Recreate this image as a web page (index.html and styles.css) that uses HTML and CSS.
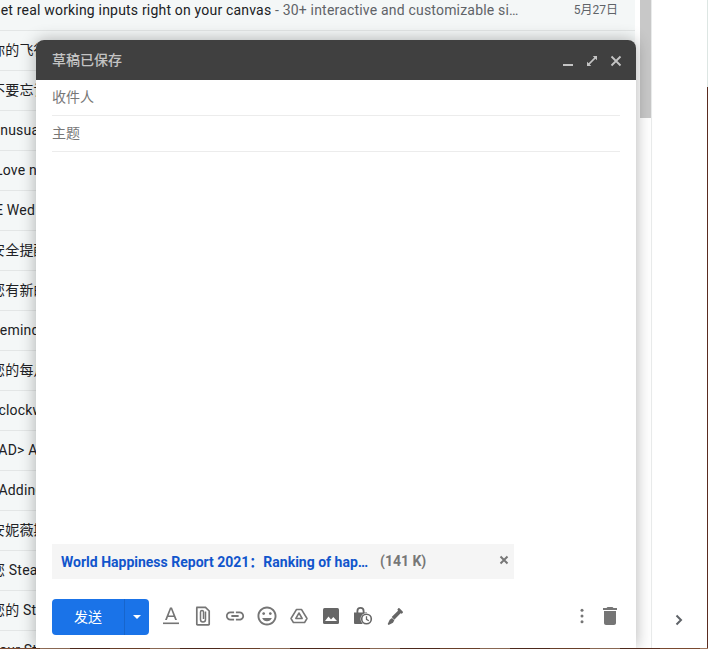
FILE: index.html
```html
<!DOCTYPE html>
<html lang="zh-CN">
<head>
<meta charset="utf-8">
<title>Compose</title>
<link rel="stylesheet" href="styles.css">
</head>
<body>
<div class="app">
  <main class="mail">
    <ul class="rows">
      <li class="row"><span class="subject">Get real working inputs right on your canvas</span><span class="snippet">&nbsp;- 30+ interactive and customizable si…</span><span class="date">5月27日</span></li>
      <li class="row"><span class="subject">你的飞行里程</span></li>
      <li class="row"><span class="subject">不要忘记</span></li>
      <li class="row"><span class="subject">Unusual</span></li>
      <li class="row"><span class="subject">-Love new</span></li>
      <li class="row"><span class="subject">-E Wed</span></li>
      <li class="row"><span class="subject">安全提醒</span></li>
      <li class="row"><span class="subject">您有新的</span></li>
      <li class="row"><span class="subject">Reminder</span></li>
      <li class="row"><span class="subject">您的每月</span></li>
      <li class="row"><span class="subject">sclockwork</span></li>
      <li class="row"><span class="subject">&lt;AD&gt; Ad</span></li>
      <li class="row"><span class="subject">sAdding</span></li>
      <li class="row"><span class="subject">安妮薇斯</span></li>
      <li class="row"><span class="subject">您 Steam</span></li>
      <li class="row"><span class="subject">您的 Steam</span></li>
      <li class="row"><span class="subject">Your Steam</span></li>
    </ul>
  </main>
  <div class="scrollbar"><div class="thumb"></div></div>
  <aside class="side">
    <svg class="chevron" width="10" height="12" viewBox="0 0 10 12"><path d="M2.500 1.500 7 6l-4.500 4.500" fill="none" stroke="#5f6368" stroke-width="2"/></svg>
  </aside>
</div>
<div class="strip"></div>

<section class="compose">
  <header class="compose-head">
    <h1 class="compose-title">草稿已保存</h1>
    <div class="head-icons">
      <svg width="12" height="12" viewBox="0 0 12 12"><rect x="1" y="9" width="10" height="2" fill="#c4c4c4"/></svg>
      <svg width="12" height="12" viewBox="0 0 12 12"><path d="M6.800 1H11V5.200L9.400 3.700 3.700 9.400 5.200 11H1V6.800L2.600 8.300 8.300 2.600z" fill="#c4c4c4"/></svg>
      <svg width="12" height="12" viewBox="0 0 12 12"><path d="M1.500 1.500l9 9M10.500 1.500l-9 9" stroke="#c4c4c4" stroke-width="1.800" fill="none"/></svg>
    </div>
  </header>
  <div class="field">收件人</div>
  <div class="field">主题</div>
  <div class="body">
    <div class="attachment">
      <span class="att-name">World Happiness Report 2021：Ranking of hap…</span>
      <span class="att-size">(141 K)</span>
      <svg class="att-close" width="10" height="10" viewBox="0 0 10 10"><path d="M1.500 1.500l7 7M8.500 1.500l-7 7" stroke="#777" stroke-width="2" fill="none"/></svg>
    </div>
  </div>
  <footer class="toolbar">
    <div class="send">
      <span class="send-label">发送</span>
      <span class="send-more"><svg width="8" height="4" viewBox="0 0 8 4"><path d="M0 0h8L4 4z" fill="#fff"/></svg></span>
    </div>
    <div class="tools">
      <svg class="tool" viewBox="0 0 20 20"><path d="M9 1.500h2l5 12.500h-1.900L13 11H7L5.900 14H4zM7.600 9.500h4.800L10 3.200z" fill="#757575"/><rect x="2" y="16.500" width="16" height="1.600" fill="#757575"/></svg>
      <svg class="tool" viewBox="0 0 20 20"><path d="M4 1.300h8.500l3.700 3.700v13a.8.800 0 0 1-.8.800H4.600a.8.800 0 0 1-.8-.8V2z" fill="none" stroke="#757575" stroke-width="1.700"/><path d="M12.500 5.500v8a2.500 2.500 0 0 1-5 0V6a1.500 1.500 0 0 1 3 0v7" fill="none" stroke="#757575" stroke-width="1.500"/></svg>
      <svg class="tool" viewBox="1 1 22 22"><path d="M3.900 12c0-1.710 1.390-3.100 3.100-3.100h4V7H7c-2.760 0-5 2.240-5 5s2.240 5 5 5h4v-1.900H7c-1.710 0-3.100-1.390-3.100-3.100zM8 13h8v-2H8v2zm9-6h-4v1.900h4c1.710 0 3.100 1.390 3.100 3.100s-1.390 3.100-3.100 3.100h-4V17h4c2.760 0 5-2.240 5-5s-2.240-5-5-5z" fill="#757575"/></svg>
      <svg class="tool" viewBox="1.500 1.500 21 21"><path d="M11.990 2C6.470 2 2 6.480 2 12s4.470 10 9.990 10C17.520 22 22 17.520 22 12S17.520 2 11.990 2zM12 20c-4.420 0-8-3.580-8-8s3.580-8 8-8 8 3.580 8 8-3.580 8-8 8zm3.500-9c.83 0 1.500-.67 1.500-1.500S16.330 8 15.500 8 14 8.670 14 9.500s.67 1.500 1.500 1.500zm-7 0c.83 0 1.500-.67 1.500-1.500S9.330 8 8.500 8 7 8.670 7 9.500 7.670 11 8.500 11zm3.500 6.500c2.330 0 4.310-1.460 5.110-3.500H6.890c.8 2.040 2.780 3.500 5.110 3.500z" fill="#757575"/></svg>
      <svg class="tool" viewBox="0 0 20 20"><path d="M7.500 3.500h5L18 12.500l-2.400 4H4.400L2 12.500z" fill="none" stroke="#757575" stroke-width="1.500" stroke-linejoin="round"/><path d="M10 7l3.200 5.500H6.800z" fill="none" stroke="#757575" stroke-width="1.500" stroke-linejoin="round"/></svg>
      <svg class="tool" viewBox="0 0 20 20"><rect x="2" y="2" width="16" height="16" rx="1.500" fill="#666"/><path d="M4 15l3.500-4.500 2.500 3 2.300-2.500L16 15z" fill="#fff"/></svg>
      <svg class="tool" viewBox="0 0 20 20"><path d="M1 6.500h2.500V5a4 4 0 0 1 8 0v1.500h2.500V17a1 1 0 0 1-1 1H2a1 1 0 0 1-1-1zM5.300 6.500h4.400V5a2.200 2.200 0 0 0-4.400 0z" fill="#666"/><circle cx="13.500" cy="13" r="6" fill="#fff"/><circle cx="13.500" cy="13" r="4.800" fill="none" stroke="#666" stroke-width="1.600"/><path d="M13.500 10.200v3.100l2.300 1.400" fill="none" stroke="#666" stroke-width="1.300"/></svg>
      <svg class="tool" viewBox="0 0 20 20"><path d="M13.500 2l1 .3 3.200 3.200.3 1-1.200 1.200-1.200-.5-6.300 6.500-2.600-2.600 6.300-6.400-.6-1.200z" fill="#666"/><path d="M7 12l2.300 2.300-1.300 2.400-4.400 2.200-.9-.9 2-4.200z" fill="#666"/></svg>
    </div>
    <div class="tools-end">
      <svg width="6" height="16" viewBox="0 0 6 16"><circle cx="3" cy="2.300" r="1.500" fill="#757575"/><circle cx="3" cy="8" r="1.500" fill="#757575"/><circle cx="3" cy="13.700" r="1.500" fill="#757575"/></svg>
      <svg width="16" height="18" viewBox="5 3 14 18"><path d="M6 19c0 1.100.9 2 2 2h8c1.100 0 2-.9 2-2V7H6v12zM19 4h-3.500l-1-1h-5l-1 1H5v2h14V4z" fill="#757575"/></svg>
    </div>
  </footer>
</section>
</body>
</html>
```

FILE: styles.css
```css
* { box-sizing: border-box; }
html, body { margin: 0; padding: 0; }
body {
  width: 708px;
  height: 649px;
  overflow: hidden;
  background: linear-gradient(#dde6e3 0 87px, #5a2c20 87px);
  font-family: Roboto, "Noto Sans CJK SC", sans-serif;
  font-size: 14px;
}
.app { display: flex; width: 707px; height: 648px; background: #fff; }
.mail { width: 640px; height: 648px; overflow: hidden; background: #fff; }
.rows { list-style: none; margin: -9px 0 0; padding: 0; width: 635px; background: #f4f7f7; }
.row {
  display: flex;
  align-items: center;
  height: 40px;
  margin-left: -9px;
  padding: 0 17px 2px 0;
  border-bottom: 1px solid #e3e6e6;
  white-space: nowrap;
  color: #202124;
  line-height: 20px;
  letter-spacing: .19px;
}
.snippet { color: #5f6368; }
.date { margin-left: auto; font-size: 12px; letter-spacing: 0; color: #5f6368; }
.scrollbar { width: 12px; height: 648px; background: #fff; border-right: 1px solid #e9ebeb; }
.thumb { width: 11px; height: 118px; background: #c8c8c8; }
.side { flex: 1; display: flex; flex-direction: column; align-items: center; justify-content: flex-end; padding: 0 2px 22px 0; }
.chevron { display: block; }
.strip {
  height: 1px;
  background: repeating-linear-gradient(90deg, #7a4a30 0 40px, #a07860 40px 70px, #5a3020 70px 110px);
}

.compose {
  position: absolute;
  left: 36px;
  top: 40px;
  width: 600px;
  height: 608px;
  display: flex;
  flex-direction: column;
  background: #fff;
  border-radius: 8px 8px 0 0;
  box-shadow: 0 0 16px rgba(0, 0, 0, .3);
}
.compose-head {
  display: flex;
  align-items: center;
  justify-content: space-between;
  height: 40px;
  padding: 0 14px 0 16px;
  background: #404040;
  border-radius: 8px 8px 0 0;
}
.compose-title { margin: 0 0 3px; font-size: 14px; font-weight: 500; color: #c4c4c4; }
.head-icons { display: flex; gap: 12px; padding-top: 1px; }
.head-icons svg { display: block; }
.field {
  height: 36px;
  margin: 0 16px;
  padding-top: 7px;
  border-bottom: 1px solid #ececec;
  line-height: 20px;
  color: #777;
}
.body { flex: 1; display: flex; flex-direction: column; justify-content: flex-end; padding: 0 16px; }
.attachment {
  position: relative;
  display: flex;
  align-items: center;
  width: 462px;
  height: 35px;
  padding: 0 0 2px 9px;
  background: #f5f5f5;
  font-weight: 700;
  white-space: nowrap;
}
.att-name { width: 319px; color: #15c; }
.att-size { color: #777; }
.att-close { position: absolute; right: 5px; top: 11px; }
.toolbar { display: flex; align-items: center; height: 69px; padding: 7px 16px 0; }
.send {
  display: flex;
  width: 97px;
  height: 36px;
  border-radius: 4px;
  background: #1a73e8;
  color: #fff;
}
.send-label { width: 73px; line-height: 36px; text-align: center; border-right: 1px solid #1765cc; }
.send-more { flex: 1; display: flex; align-items: center; justify-content: center; }
.send-more svg { display: block; }
.tools { display: flex; align-items: center; gap: 12px; margin: 0 0 2px 12px; }
.tool { display: block; width: 20px; height: 20px; }
.tools-end { margin: 0 0 2px auto; display: flex; align-items: center; gap: 17px; padding-right: 2px; }
.tools-end svg { display: block; }
```
